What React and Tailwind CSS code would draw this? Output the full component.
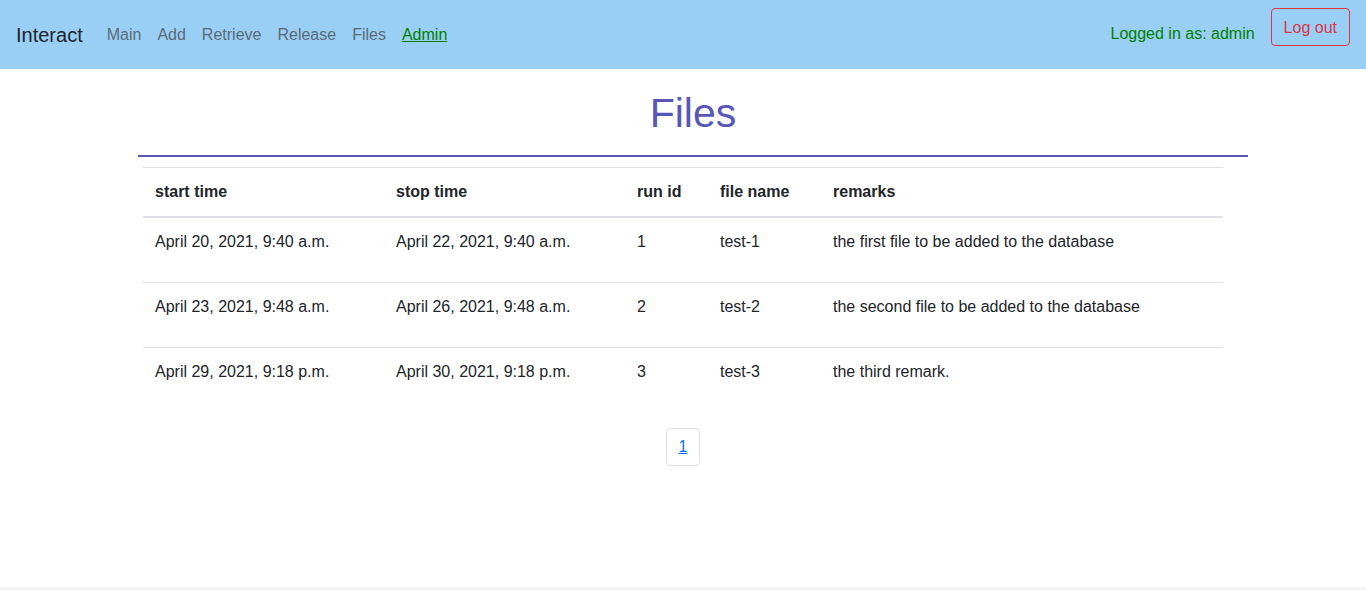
import React from "react";

const rows = [
  {
    start: "April 20, 2021, 9:40 a.m.",
    stop: "April 22, 2021, 9:40 a.m.",
    run: "1",
    file: "test-1",
    remarks: "the first file to be added to the database",
  },
  {
    start: "April 23, 2021, 9:48 a.m.",
    stop: "April 26, 2021, 9:48 a.m.",
    run: "2",
    file: "test-2",
    remarks: "the second file to be added to the database",
  },
  {
    start: "April 29, 2021, 9:18 p.m.",
    stop: "April 30, 2021, 9:18 p.m.",
    run: "3",
    file: "test-3",
    remarks: "the third remark.",
  },
];

const navLinks = ["Main", "Add", "Retrieve", "Release", "Files"];

export default function App() {
  return (
    <div
      className="w-full text-[#212529]"
      style={{ fontFamily: '"Liberation Sans", Arial, sans-serif' }}
    >
      {/* Navbar */}
      <nav className="h-[69px] bg-[#99cff5] flex items-start justify-between px-4">
        <div className="flex items-center h-full">
          <span className="text-[20px] text-[#212529] mr-6">Interact</span>
          <div className="flex items-center gap-4 text-base">
            {navLinks.map((l) => (
              <a key={l} className="text-[#5b6a78]">
                {l}
              </a>
            ))}
            <a className="text-[#008000] underline">Admin</a>
          </div>
        </div>
        <div className="flex items-start h-full">
          <span className="text-base text-[#008000] mt-[22px] mr-[16px]">
            Logged in as: admin
          </span>
          <button className="mt-2 h-[38px] px-3 pt-[2px] border border-[#dc3545] rounded text-[#dc3545] text-base leading-none">
            Log out
          </button>
        </div>
      </nav>

      {/* Content */}
      <main className="min-h-[518px] bg-white">
        <div className="w-[1110px] ml-[138px]">
          <h1 className="text-center text-[41px] leading-[48px] text-[#5856b9] pt-[20px] pb-[18px]">
            Files
          </h1>
          <div className="h-[2px] bg-[#5a55b8]" />

          <table className="ml-[5px] mt-[10px] w-[1080px] text-base border-collapse text-left">
            <thead>
              <tr className="border-t border-[#dee2e6] border-b-2 border-b-[#dee2e6]">
                <th className="w-[241px] px-3 py-3 font-bold leading-6">start time</th>
                <th className="w-[241px] px-3 py-3 font-bold leading-6">stop time</th>
                <th className="w-[83px] px-3 py-3 font-bold leading-6">run id</th>
                <th className="w-[113px] px-3 py-3 font-bold leading-6">file name</th>
                <th className="px-3 py-3 font-bold leading-6">remarks</th>
              </tr>
            </thead>
            <tbody>
              {rows.map((r, i) => (
                <tr
                  key={r.run}
                  className={`h-[65px] align-top ${i < rows.length - 1 ? "border-b border-[#dee2e6]" : ""}`}
                >
                  <td className="px-3 pt-3 leading-6">{r.start}</td>
                  <td className="px-3 pt-3 leading-6">{r.stop}</td>
                  <td className="px-3 pt-3 leading-6">{r.run}</td>
                  <td className="px-3 pt-3 leading-6">{r.file}</td>
                  <td className="px-3 pt-3 leading-6">{r.remarks}</td>
                </tr>
              ))}
            </tbody>
          </table>
        </div>

        <div className="flex justify-center mt-[16px]">
          <a className="w-[34px] h-[38px] flex items-center justify-center border border-[#dee2e6] rounded text-[#0d6efd] underline text-base">
            1
          </a>
        </div>
      </main>
      <div className="h-[3px] bg-[#f3f3f3]" />
    </div>
  );
}
